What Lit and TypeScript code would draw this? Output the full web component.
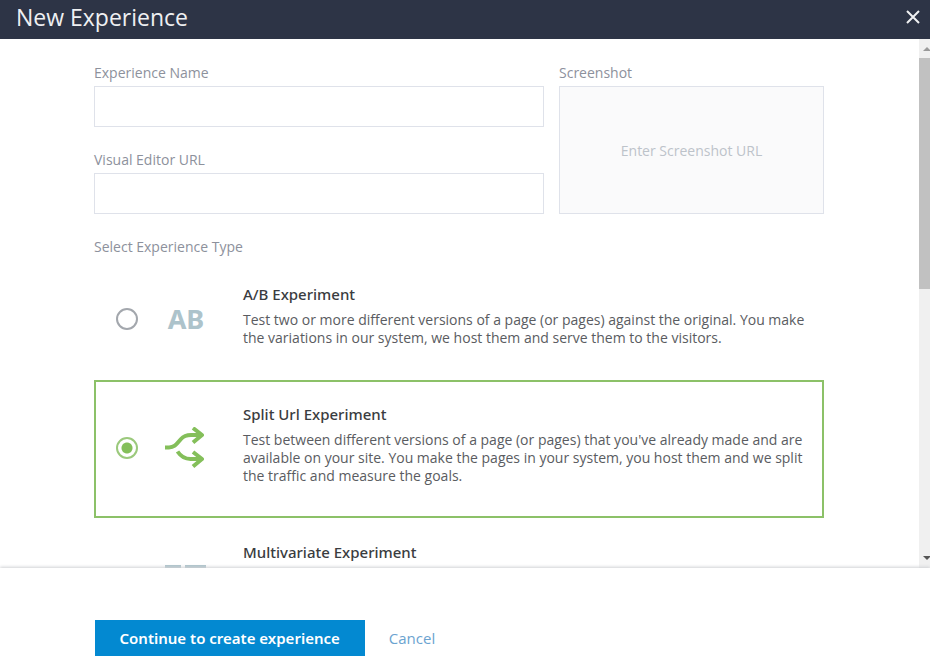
import { LitElement, html, svg, css, nothing } from "lit";
import { customElement, state } from "lit/decorators.js";
import { classMap } from "lit/directives/class-map.js";

const splitIcon = svg`
  <svg class="glyph split" viewBox="0 0 40 42" aria-hidden="true">
    <path d="M0 20.500h4c6 0 8-4 12-8.500C19 8.500 22 8 26 8h10M28 1l9 7-9 7.500M12.500 24.500c4 6 8 7.500 13 7.500h10M28 25l9 7-9 7.500" />
  </svg>`;

const gridIcon = svg`
  <svg class="glyph grid" viewBox="0 0 42 44" aria-hidden="true">
    <path d="M0 1h16v19H0zM20 1h21v19H20zM0 24h16v19H0zM20 24h21v19H20z" />
  </svg>`;

const types = [
  {
    id: "ab",
    title: "A/B Experiment",
    text: "Test two or more different versions of a page (or pages) against the original. You make the variations in our system, we host them and serve them to the visitors.",
    icon: html`<span class="letters" aria-hidden="true">AB</span>`,
  },
  {
    id: "split",
    title: "Split Url Experiment",
    text: "Test between different versions of a page (or pages) that you've already made and are available on your site. You make the pages in your system, you host them and we split the traffic and measure the goals.",
    icon: splitIcon,
  },
  {
    id: "multi",
    title: "Multivariate Experiment",
    text: "",
    icon: gridIcon,
  },
];

@customElement("app-root")
export class AppRoot extends LitElement {
  @state() selected = "split";

  static styles = css`
    :host {
      display: flex;
      flex-direction: column;
      height: 100vh;
      background: #fff;
      color: #5a5c61;
      font-family: "Open Sans", "Noto Sans", sans-serif;
      font-size: 14px;
    }
    * { box-sizing: border-box; }
    .header {
      display: flex;
      align-items: center;
      justify-content: space-between;
      padding: 0 8px 6px 16px;
      height: 39px;
      flex: none;
      background: #2d3446;
      color: #eff0f2;
    }
    .title { margin: 0; font-size: 23px; line-height: 32px; font-weight: 500; }
    .close {
      display: flex;
      padding: 2px;
      border: 0;
      background: none;
      color: inherit;
      cursor: pointer;
    }
    .close svg { width: 14px; height: 14px; stroke: currentColor; stroke-width: 2; fill: none; }
    .middle { display: flex; flex: 1; min-height: 0; }
    .scroller { flex: 1; min-width: 0; overflow-y: auto; scrollbar-width: none; padding: 24px 17px 0 16px; }
    .wrap { max-width: 730px; margin: 0 auto; }
    .form {
      display: grid;
      grid-template-columns: 450fr 265fr;
      column-gap: 15px;
    }
    .fields { display: flex; flex-direction: column; gap: 23px; }
    .field { display: flex; flex-direction: column; gap: 3px; }
    .label, .legend { font-size: 14px; line-height: 20px; color: #8d919c; padding: 0; }
    .input {
      width: 100%;
      height: 41px;
      padding: 0 12px;
      border: 1px solid #dfe2ea;
      border-radius: 0;
      outline: none;
      background: #fff;
      color: #4c4f55;
      font: inherit;
    }
    .input.shot { flex: 1; background: #fafafb; text-align: center; }
    .input::placeholder { color: #bdc3ca; opacity: 1; }
    .types { border: 0; margin: 23px 0 0; padding: 0; min-width: 0; }
    .legend { margin-bottom: 3px; }
    .card {
      display: grid;
      grid-template-columns: 22px 42px 1fr;
      column-gap: 27px;
      align-items: center;
      padding: 22px 16px 25px 20px;
      border: 2px solid transparent;
      cursor: pointer;
    }
    .card.on { border-color: #8cc168; }
    .radio {
      appearance: none;
      width: 22px;
      height: 22px;
      margin: 0;
      border: 2px solid #a3a7ad;
      border-radius: 50%;
      background: #fff;
    }
    .radio:checked {
      border-color: #9bc97c;
      background: radial-gradient(circle, #84bf5a 5px, #fff 6px);
    }
    .icon { display: flex; color: #adc3cb; }
    .on .icon { color: #84bf5a; }
    .letters { flex: 1; text-align: center; font-family: "Noto Sans", sans-serif; font-size: 27px; line-height: 36px; font-weight: 700; }
    .glyph { display: block; }
    .split { width: 40px; height: 42px; fill: none; stroke: currentColor; stroke-width: 4; stroke-linejoin: round; }
    .grid { width: 42px; height: 44px; fill: currentColor; }
    .copy { padding: 0 0 6px 9px; }
    .name {
      display: block;
      margin-bottom: 7px;
      font-family: "Noto Sans", sans-serif;
      font-size: 15px;
      line-height: 20px;
      font-weight: 500;
      color: #3a3c40;
    }
    .text { display: block; min-height: 36px; line-height: 18px; }
    .blank { display: block; min-height: 54px; }
    .bar {
      display: flex;
      flex-direction: column;
      justify-content: space-between;
      align-items: flex-end;
      flex: none;
      width: 11px;
      padding: 7px 0;
      background: #f0f0f0;
      overflow: hidden;
    }
    .bar svg { width: 7px; height: 5px; flex: none; fill: #555; }
    .bar .up { fill: #9a9a9a; }
    .track { flex: 1; align-self: stretch; margin: 7px 0; }
    .thumb { height: 47%; min-height: 40px; background: #c1c1c1; }
    .footer {
      flex: none;
      position: relative;
      padding: 52px 27px 6px 16px;
      background: #fff;
      box-shadow: 0 -1px 3px #cfd1d4;
    }
    .actions { display: flex; align-items: center; gap: 24px; }
    .primary {
      height: 36px;
      padding: 0 25px;
      border: 0;
      background: #0389d1;
      color: #fff;
      font-family: "Noto Sans", sans-serif;
      font-size: 15px;
      font-weight: 600;
      cursor: pointer;
    }
    .cancel { color: #6ba3d0; font-size: 15px; line-height: 20px; text-decoration: none; }
  `;

  render() {
    return html`
      <header class="header">
        <h1 class="title">New Experience</h1>
        <button class="close" aria-label="Close">
          <svg viewBox="0 0 14 14"><path d="M1 1l12 12M13 1 1 13" /></svg>
        </button>
      </header>
      <div class="middle">
        <main class="scroller">
          <div class="wrap">
            <div class="form">
              <div class="fields">
                <div class="field">
                  <label class="label" for="name">Experience Name</label>
                  <input class="input" id="name" type="text" />
                </div>
                <div class="field">
                  <label class="label" for="url">Visual Editor URL</label>
                  <input class="input" id="url" type="text" />
                </div>
              </div>
              <div class="field">
                <label class="label" for="shot">Screenshot</label>
                <input class="input shot" id="shot" type="text" placeholder="Enter Screenshot URL" />
              </div>
            </div>
            <fieldset class="types">
              <legend class="legend">Select Experience Type</legend>
              ${types.map(
                (t) => html`
                  <label class=${classMap({ card: true, on: t.id === this.selected })}>
                    <input
                      class="radio"
                      type="radio"
                      name="type"
                      .checked=${t.id === this.selected}
                      @change=${() => (this.selected = t.id)}
                    />
                    <span class="icon">${t.icon}</span>
                    <span class="copy">
                      <span class="name">${t.title}</span>
                      <span class=${t.text ? "text" : "blank"}>${t.text || nothing}</span>
                    </span>
                  </label>
                `
              )}
            </fieldset>
          </div>
        </main>
        <div class="bar" aria-hidden="true">
          <svg class="up" viewBox="0 0 7 5"><path d="M0 5l4-4 4 4z" /></svg>
          <div class="track"><div class="thumb"></div></div>
          <svg viewBox="0 0 7 5"><path d="M0 0l4 4 4-4z" /></svg>
        </div>
      </div>
      <footer class="footer">
        <div class="wrap actions">
          <button class="primary">Continue to create experience</button>
          <a class="cancel" href="#">Cancel</a>
        </div>
      </footer>
    `;
  }
}
